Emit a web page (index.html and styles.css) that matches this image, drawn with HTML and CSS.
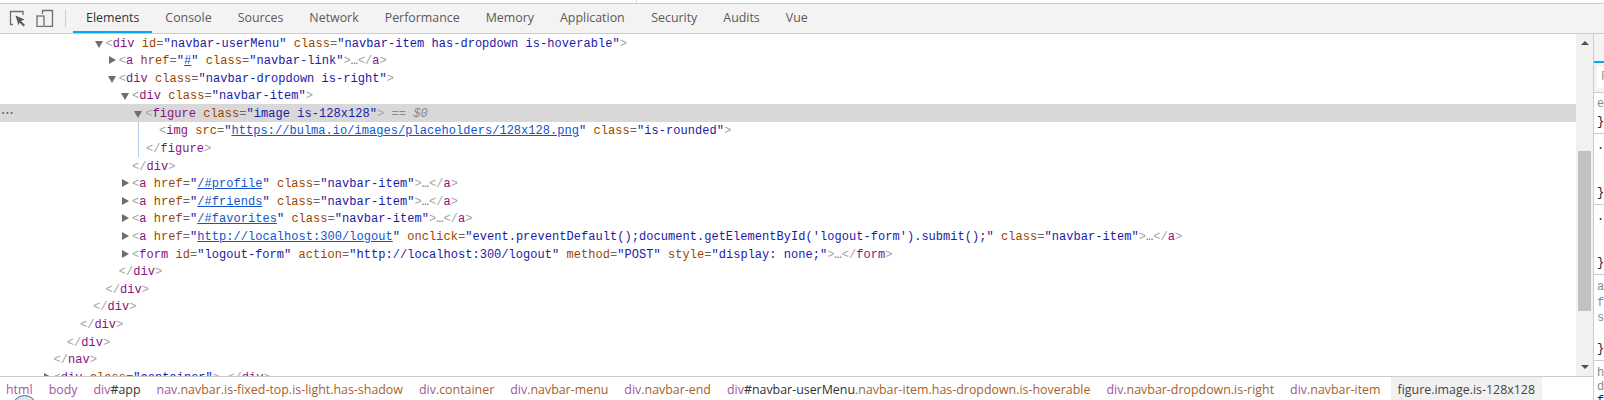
FILE: index.html
```html
<!DOCTYPE html>
<html lang="en">
<head>
    <meta charset="UTF-8">
    <title>DevTools</title>
    <link rel="stylesheet" href="styles.css">
</head>
<body>
    <div class="topstrip"></div>
    <div class="toolbar">
        <svg class="icon" width="18" height="18" viewBox="0 0 18 18">
            <path d="M5 15.5H2.5V2.5H15V6" fill="none" stroke="#6e6e6e" stroke-width="1.3"/>
            <path d="M7.5 6.5L16.5 10.5L13 12L17 16L15.5 17.5L11.5 13.5L10.5 16.5Z" fill="#5a5a5a"/>
        </svg>
        <svg class="icon device" width="18" height="18" viewBox="0 0 18 18">
            <path d="M6.5 5V1.5H16.5V17.5H9" fill="none" stroke="#6e6e6e" stroke-width="1.3"/>
            <rect x="1" y="7" width="7" height="10.5" fill="none" stroke="#6e6e6e" stroke-width="1.3"/>
        </svg>
        <div class="divider"></div>
        <ul class="tabs">
            <li class="active">Elements</li>
            <li>Console</li>
            <li>Sources</li>
            <li>Network</li>
            <li>Performance</li>
            <li>Memory</li>
            <li>Application</li>
            <li>Security</li>
            <li>Audits</li>
            <li>Vue</li>
        </ul>
    </div>

    <div class="main">
        <div class="left">
            <div class="body">
                <div class="tree">
                    <div class="row d4 open"><b>&lt;</b><i>div</i> <em>id</em>=<u>"navbar-userMenu"</u> <em>class</em>=<u>"navbar-item has-dropdown is-hoverable"</u><b>&gt;</b></div>
                    <div class="row d5 closed"><b>&lt;</b><i>a</i> <em>href</em>=<u>"<a>#</a>"</u> <em>class</em>=<u>"navbar-link"</u><b>&gt;</b>…<b>&lt;/</b><i>a</i><b>&gt;</b></div>
                    <div class="row d5 open"><b>&lt;</b><i>div</i> <em>class</em>=<u>"navbar-dropdown is-right"</u><b>&gt;</b></div>
                    <div class="row d6 open"><b>&lt;</b><i>div</i> <em>class</em>=<u>"navbar-item"</u><b>&gt;</b></div>
                    <div class="row d7 open selected"><span class="dots">•••</span><b>&lt;</b><i>figure</i> <em>class</em>=<u>"image is-128x128"</u><b>&gt;</b> <span class="eq">== $0</span></div>
                    <div class="guide">
                        <div class="row in1"><b>&lt;</b><i>img</i> <em>src</em>=<u>"<a>https://bulma.io/images/placeholders/128x128.png</a>"</u> <em>class</em>=<u>"is-rounded"</u><b>&gt;</b></div>
                        <div class="row in2"><b>&lt;/</b><i>figure</i><b>&gt;</b></div>
                    </div>
                    <div class="row d6"><b>&lt;/</b><i>div</i><b>&gt;</b></div>
                    <div class="row d6 closed"><b>&lt;</b><i>a</i> <em>href</em>=<u>"<a>/#profile</a>"</u> <em>class</em>=<u>"navbar-item"</u><b>&gt;</b>…<b>&lt;/</b><i>a</i><b>&gt;</b></div>
                    <div class="row d6 closed"><b>&lt;</b><i>a</i> <em>href</em>=<u>"<a>/#friends</a>"</u> <em>class</em>=<u>"navbar-item"</u><b>&gt;</b>…<b>&lt;/</b><i>a</i><b>&gt;</b></div>
                    <div class="row d6 closed"><b>&lt;</b><i>a</i> <em>href</em>=<u>"<a>/#favorites</a>"</u> <em>class</em>=<u>"navbar-item"</u><b>&gt;</b>…<b>&lt;/</b><i>a</i><b>&gt;</b></div>
                    <div class="row d6 closed"><b>&lt;</b><i>a</i> <em>href</em>=<u>"<a>http://localhost:300/logout</a>"</u> <em>onclick</em>=<u>"event.preventDefault();document.getElementById('logout-form').submit();"</u> <em>class</em>=<u>"navbar-item"</u><b>&gt;</b>…<b>&lt;/</b><i>a</i><b>&gt;</b></div>
                    <div class="row d6 closed"><b>&lt;</b><i>form</i> <em>id</em>=<u>"logout-form"</u> <em>action</em>=<u>"http://localhost:300/logout"</u> <em>method</em>=<u>"POST"</u> <em>style</em>=<u>"display: none;"</u><b>&gt;</b>…<b>&lt;/</b><i>form</i><b>&gt;</b></div>
                    <div class="row d5"><b>&lt;/</b><i>div</i><b>&gt;</b></div>
                    <div class="row d4"><b>&lt;/</b><i>div</i><b>&gt;</b></div>
                    <div class="row d3"><b>&lt;/</b><i>div</i><b>&gt;</b></div>
                    <div class="row d2"><b>&lt;/</b><i>div</i><b>&gt;</b></div>
                    <div class="row d1"><b>&lt;/</b><i>div</i><b>&gt;</b></div>
                    <div class="row d0"><b>&lt;/</b><i>nav</i><b>&gt;</b></div>
                    <div class="row d0 closed"><b>&lt;</b><i>div</i> <em>class</em>=<u>"container"</u><b>&gt;</b>…<b>&lt;/</b><i>div</i><b>&gt;</b></div>
                </div>
                <div class="scrollbar">
                    <span class="arrow up"></span>
                    <div class="track"><div class="thumb"></div></div>
                    <span class="arrow down"></span>
                </div>
            </div>
            <div class="crumbs">
                <span class="crumb"><i>html</i></span>
                <span class="crumb"><i>body</i></span>
                <span class="crumb"><i>div</i><s>#app</s></span>
                <span class="crumb"><i>nav</i><em>.navbar.is-fixed-top.is-light.has-shadow</em></span>
                <span class="crumb"><i>div</i><em>.container</em></span>
                <span class="crumb"><i>div</i><em>.navbar-menu</em></span>
                <span class="crumb"><i>div</i><em>.navbar-end</em></span>
                <span class="crumb"><i>div</i><s>#navbar-userMenu</s><em>.navbar-item.has-dropdown.is-hoverable</em></span>
                <span class="crumb"><i>div</i><em>.navbar-dropdown.is-right</em></span>
                <span class="crumb"><i>div</i><em>.navbar-item</em></span>
                <span class="crumb current">figure.image.is-128x128</span>
            </div>
            <div class="blob"></div>
        </div>

        <div class="side">
            <div class="side-tabs"></div>
            <div class="filter"><div class="filter-box">F</div></div>
            <div class="rule h1"><span class="gr">e</span><br>}</div>
            <div class="rule h2">.<br><br><br>}</div>
            <div class="rule h2">.<br><br><br>}</div>
            <div class="rule h3"><span class="gr">a</span><br><span class="gr">f</span><br><span class="gr">s</span><br><br>}</div>
            <div class="rule h4"><span class="gr">h</span><br><span class="gr">d</span><br>f</div>
        </div>
    </div>
</body>
</html>
```
FILE: styles.css
```css
*{
    margin: 0px;
    padding: 0px;
    list-style: none;
    box-sizing: border-box;
}
html,body{
    height: 400px;
    overflow: hidden;
    background-color: #fff;
}
body{
    display: flex;
    flex-direction: column;
}
.topstrip{
    width: 1px;
    height: 3px;
    flex: none;
    margin-left: 636px;
    background-color: #ddd;
}
.toolbar{
    height: 31px;
    flex: none;
    display: flex;
    align-items: center;
    background-color: #f3f3f3;
    border-top: 1px solid #ccc;
    border-bottom: 1px solid #ccc;
    padding-left: 8px;
}
.icon{
    flex: none;
    margin-top: -1px;
}
.device{
    margin-left: 10px;
}
.divider{
    width: 1px;
    height: 17px;
    background-color: #ccc;
    margin-left: 11px;
    margin-right: 7px;
}
.tabs{
    display: flex;
    height: 29px;
    font-family: "Open Sans", sans-serif;
    font-size: 12.4px;
    color: #5a5a5a;
}
.tabs li{
    padding: 0 13px;
    line-height: 28px;
}
.tabs li:nth-child(n+8){
    padding-left: 13.5px;
    padding-right: 12.5px;
}
.tabs .active{
    color: #333;
    border-bottom: 2px solid #03a9f4;
}

.main{
    flex: 1;
    display: flex;
    min-height: 0;
}
.left{
    flex: 1;
    min-width: 0;
    display: flex;
    flex-direction: column;
    position: relative;
}
.body{
    flex: 1;
    min-height: 0;
    display: flex;
}
.tree{
    flex: 1;
    min-width: 0;
    overflow: hidden;
    font-family: "Liberation Mono", monospace;
    font-size: 12px;
    letter-spacing: .04px;
    color: #666;
}
.row{
    height: 17.6px;
    padding-top: 1.5px;
    line-height: 17.6px;
    white-space: pre;
    position: relative;
}
.selected{
    background-color: #d8d8d8;
}
.d0{padding-left: 53.5px;}
.d1{padding-left: 66.7px;}
.d2{padding-left: 79.9px;}
.d3{padding-left: 93.1px;}
.d4{padding-left: 105.5px;}
.d5{padding-left: 118.8px;}
.d6{padding-left: 132px;}
.d7{padding-left: 145.2px;}
.guide{
    margin-left: 138px;
    border-left: 1px solid #b5cde8;
}
.in1{padding-left: 20px;}
.in2{padding-left: 7px;}
.open::before,.closed::before{
    content: "";
    display: inline-block;
    width: 0;
    height: 0;
}
.open::before{
    margin-left: -11px;
    margin-right: 3px;
    border-left: 4px solid transparent;
    border-right: 4px solid transparent;
    border-top: 7px solid #6e6e6e;
    vertical-align: -1px;
}
.closed::before{
    margin-left: -10px;
    margin-right: 3px;
    border-top: 4px solid transparent;
    border-bottom: 4px solid transparent;
    border-left: 7px solid #6e6e6e;
    vertical-align: 0px;
}
.tree b{
    font-weight: normal;
    color: #a5a5a5;
}
.tree i{
    font-style: normal;
    color: #881280;
}
.tree em{
    font-style: normal;
    color: #994500;
}
.tree u{
    text-decoration: none;
    color: #1a1aa6;
}
.tree a{
    color: #1155cc;
    text-decoration: underline;
}
.eq{
    font-style: italic;
    color: #888;
}
.dots{
    position: absolute;
    left: 1px;
    top: 1px;
    font-size: 7px;
    letter-spacing: 0;
    color: #666;
}

.scrollbar{
    width: 17px;
    flex: none;
    background-color: #f1f1f1;
    display: flex;
    flex-direction: column;
    align-items: center;
}
.track{
    flex: 1;
    width: 100%;
    padding: 106px 2px 0;
}
.thumb{
    height: 160px;
    background-color: #c1c1c1;
}
.arrow{
    width: 0;
    height: 0;
    flex: none;
    border-left: 4px solid transparent;
    border-right: 4px solid transparent;
}
.up{
    margin-top: 7px;
    border-bottom: 4px solid #505050;
}
.down{
    margin-bottom: 7px;
    border-top: 4px solid #505050;
}

.crumbs{
    height: 24px;
    flex: none;
    display: flex;
    border-top: 1px solid #ccc;
    font-family: "Open Sans", sans-serif;
    font-size: 12.42px;
    line-height: 26px;
    white-space: nowrap;
    background-color: #fff;
}
.crumb{
    padding: 0 10px 0 6px;
    color: #333;
}
.crumb i{
    font-style: normal;
    color: #881280;
    opacity: .75;
}
.crumb em{
    font-style: normal;
    color: #994500;
    opacity: .85;
}
.crumb s{
    text-decoration: none;
    color: #333;
}
.current{
    background-color: #f1f1f1;
    padding: 0 7px;
    color: #444;
}
.blob{
    position: absolute;
    left: 12px;
    top: 361px;
    width: 25px;
    height: 25px;
    border-radius: 50%;
    border: 1px solid #3f6f92;
    background-color: #dfe6ea;
}

.side{
    width: 11px;
    flex: none;
    border-left: 1px solid #ccc;
    overflow: hidden;
    font-family: "Liberation Mono", monospace;
    font-size: 12px;
    line-height: 15.5px;
    white-space: nowrap;
}
.side-tabs{
    height: 29px;
    background-color: #f3f3f3;
    border-bottom: 2px solid #03a9f4;
}
.filter{
    height: 30px;
    background-color: #f3f3f3;
    padding: 4px 0 0 3px;
    border-bottom: 1px solid #ccc;
}
.filter-box{
    height: 21px;
    background-color: #fff;
    padding-left: 4px;
    color: #999;
    line-height: 21px;
}
.rule{
    padding: 5px 0 0 3px;
    border-bottom: 1px solid #ccc;
    color: #222;
}
.gr{
    color: #8a8a8a;
}
.h1{height: 41px; line-height: 18px; padding-top: 2px;}
.h2{height: 70.5px;}
.h3{height: 86px;}
.h4{height: 45px; line-height: 14px;}
```
